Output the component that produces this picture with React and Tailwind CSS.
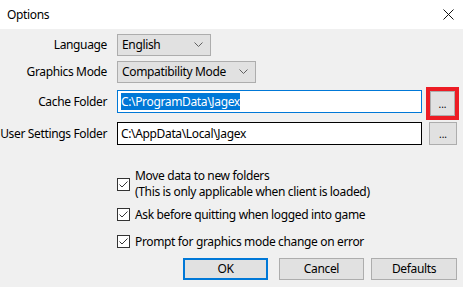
import React from "react";

const font = { fontFamily: '"Noto Sans", "Open Sans", sans-serif' };

const Chevron = () => (
  <svg width="9" height="6" viewBox="0 0 9 6" className="shrink-0">
    <path d="M0.5 0.5 L4.5 4.5 L8.5 0.5" fill="none" stroke="#606060" strokeWidth="1" />
  </svg>
);

const Check = () => (
  <span className="w-[13px] h-[13px] border border-[#333333] bg-white flex items-center justify-center shrink-0">
    <svg width="11" height="11" viewBox="0 0 11 11">
      <path d="M1.5 5.5 L4 8 L9.5 2.5" fill="none" stroke="#333333" strokeWidth="1" />
    </svg>
  </span>
);

const Label = ({ children }) => (
  <div className="w-[107px] text-right text-black shrink-0 whitespace-nowrap">{children}</div>
);

const BrowseBtn = () => (
  <div className="w-[28px] h-[23px] bg-[#e1e1e1] border border-[#adadad] flex items-center justify-center text-[10px] leading-none tracking-normal text-black">
    ...
  </div>
);

export default function App() {
  return (
    <div className="w-[463px] h-[287px] bg-[#f0f0f0] flex flex-col text-[12px] tracking-[-0.35px]" style={font}>
      {/* Title bar */}
      <div className="h-[29px] bg-white flex items-center justify-between pl-[7px] pr-[9px] shrink-0">
        <span className="text-black">Options</span>
        <svg width="11" height="11" viewBox="0 0 11 11">
          <path d="M0.5 0.5 L10.5 10.5 M10.5 0.5 L0.5 10.5" stroke="#111" strokeWidth="1" />
        </svg>
      </div>

      <div className="flex flex-col pt-[5px]">
        {/* Language */}
        <div className="flex items-center gap-[10px] h-[22px]">
          <Label>Language</Label>
          <div className="w-[94px] h-[22px] bg-[#e1e1e1] border border-[#adadad] flex items-center justify-between pl-[4px] pr-[7px] text-black">
            <span>English</span>
            <Chevron />
          </div>
        </div>

        {/* Graphics Mode */}
        <div className="flex items-center gap-[10px] h-[22px] mt-[5px]">
          <Label>Graphics Mode</Label>
          <div className="w-[139px] h-[22px] bg-[#e1e1e1] border border-[#adadad] flex items-center justify-between pl-[4px] pr-[7px] text-black">
            <span>Compatibility Mode</span>
            <Chevron />
          </div>
        </div>

        {/* Cache Folder */}
        <div className="flex items-start h-[33px] mt-[4px]">
          <div className="flex items-center gap-[10px] mt-[3px] h-[23px]">
            <Label>Cache Folder</Label>
            <div className="w-[305px] h-[23px] bg-white border border-[#0078d7] flex items-center pl-[3px]">
              <span className="bg-[#0078d7] text-white leading-[17px]">C:\ProgramData\Jagex</span>
            </div>
          </div>
          <div className="ml-[4px] w-[33px] h-[33px] border-[4px] border-[#ed1c24] flex">
            <div className="flex-1 bg-[#e1e1e1] border border-[#adadad] flex items-center justify-center text-[10px] leading-none tracking-normal text-black">
              ...
            </div>
          </div>
        </div>

        {/* User Settings Folder */}
        <div className="flex items-center h-[23px] mt-[2px]">
          <div className="flex items-center gap-[10px]">
            <Label>User Settings Folder</Label>
            <div className="w-[305px] h-[23px] bg-white border border-[#000000] flex items-center pl-[3px] text-black">
              C:\AppData\Local\Jagex
            </div>
          </div>
          <div className="ml-[7px]">
            <BrowseBtn />
          </div>
        </div>

        {/* Checkboxes */}
        <div className="flex flex-col pl-[117px] mt-[23px] text-black">
          <div className="flex items-center gap-[5px]">
            <Check />
            <div className="leading-[16px]">
              <div>Move data to new folders</div>
              <div>(This is only applicable when client is loaded)</div>
            </div>
          </div>
          <div className="flex items-center gap-[5px] mt-[7px] leading-[15px]">
            <Check />
            <span>Ask before quitting when logged into game</span>
          </div>
          <div className="flex items-center gap-[5px] mt-[12px] leading-[15px]">
            <Check />
            <span>Prompt for graphics mode change on error</span>
          </div>
        </div>

        {/* Buttons */}
        <div className="flex pl-[183px] mt-[9px] text-black">
          <div className="w-[85px] h-[22px] bg-[#e1e1e1] border-2 border-[#0078d7] flex items-center justify-center">OK</div>
          <div className="w-[85px] h-[22px] bg-[#e1e1e1] border border-[#adadad] flex items-center justify-center ml-[11px]">Cancel</div>
          <div className="w-[86px] h-[22px] bg-[#e1e1e1] border border-[#adadad] flex items-center justify-center ml-[7px]">Defaults</div>
        </div>
      </div>
    </div>
  );
}
